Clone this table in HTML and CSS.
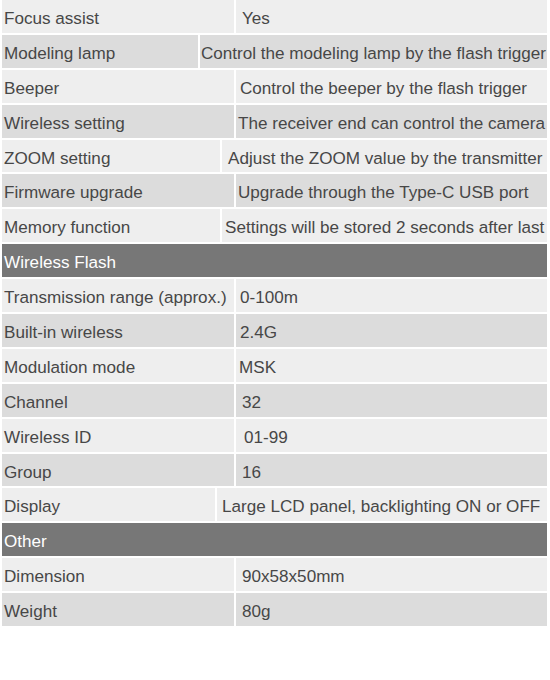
FILE: index.html
```html
<!DOCTYPE html>
<html lang="en">
<head>
<meta charset="utf-8">
<title>Specifications</title>
<link rel="stylesheet" href="styles.css">
</head>
<body>
<div class="spec">
  <div class="row light w232"><div class="k">Focus assist</div><div class="v in6">Yes</div></div>
  <div class="row dark w196"><div class="k">Modeling lamp</div><div class="v in1">Control the modeling lamp by the flash trigger</div></div>
  <div class="row light w232"><div class="k">Beeper</div><div class="v in4">Control the beeper by the flash trigger</div></div>
  <div class="row dark w232"><div class="k">Wireless setting</div><div class="v in2">The receiver end can control the camera</div></div>
  <div class="row light w218"><div class="k">ZOOM setting</div><div class="v in6">Adjust the ZOOM value by the transmitter</div></div>
  <div class="row dark w232"><div class="k">Firmware upgrade</div><div class="v in2">Upgrade through the Type-C USB port</div></div>
  <div class="row light w218"><div class="k">Memory function</div><div class="v in3">Settings will be stored 2 seconds after last</div></div>
  <div class="row head"><div class="k">Wireless Flash</div></div>
  <div class="row light w232"><div class="k">Transmission range (approx.)</div><div class="v in4">0-100m</div></div>
  <div class="row dark w232"><div class="k">Built-in wireless</div><div class="v in4">2.4G</div></div>
  <div class="row light w232"><div class="k">Modulation mode</div><div class="v in3">MSK</div></div>
  <div class="row dark w232"><div class="k">Channel</div><div class="v in6">32</div></div>
  <div class="row light w232"><div class="k">Wireless ID</div><div class="v in8">01-99</div></div>
  <div class="row dark w232"><div class="k">Group</div><div class="v in6">16</div></div>
  <div class="row light w213"><div class="k">Display</div><div class="v in5">Large LCD panel, backlighting ON or OFF</div></div>
  <div class="row head"><div class="k">Other</div></div>
  <div class="row light w232"><div class="k">Dimension</div><div class="v in6">90x58x50mm</div></div>
  <div class="row dark w232"><div class="k">Weight</div><div class="v in6">80g</div></div>
</div>
</body>
</html>
```
FILE: styles.css
```css
html, body {
  margin: 0;
  padding: 0;
  background: #ffffff;
}

body {
  font-family: "Liberation Sans", Arial, sans-serif;
  font-size: 17.1px;
  color: #474747;
}

.spec {
  display: flex;
  flex-direction: column;
  gap: 2px;
  padding: 0 3px 0 2px;
}

.row {
  display: grid;
  column-gap: 2px;
  height: 32.9px;
}

.w232 { grid-template-columns: 232px 1fr; }
.w196 { grid-template-columns: 196px 1fr; }
.w218 { grid-template-columns: 218px 1fr; }
.w213 { grid-template-columns: 213px 1fr; }

.k, .v {
  box-sizing: border-box;
  height: 32.9px;
  padding: 9px 0 0 2px;
  line-height: 20px;
  white-space: nowrap;
  overflow: hidden;
}

.light .k, .light .v { background: #eeeeee; }
.dark .k, .dark .v { background: #dcdcdc; }

.head {
  grid-template-columns: 1fr;
  background: #777777;
}
.head .k {
  color: #ffffff;
  background: #777777;
}

.in1 { padding-left: 1px; }
.in2 { padding-left: 2px; }
.in3 { padding-left: 3px; }
.in4 { padding-left: 4px; }
.in5 { padding-left: 5px; }
.in6 { padding-left: 6px; }
.in8 { padding-left: 8px; }
```
